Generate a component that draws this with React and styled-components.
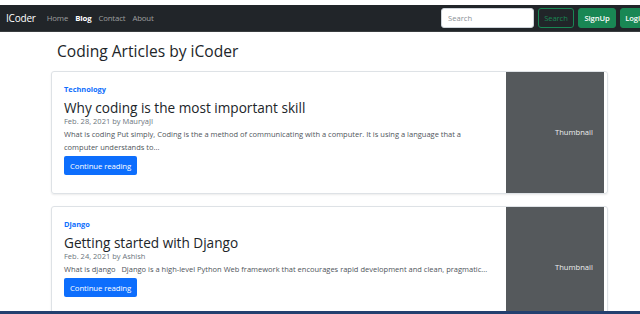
import React from 'react';
import styled, { createGlobalStyle } from 'styled-components';

const GlobalStyle = createGlobalStyle`
  html, body {
    margin: 0;
    padding: 0;
    background: #fff;
    font-family: 'Open Sans', 'Noto Sans', 'DejaVu Sans', sans-serif;
  }
`;

const Page = styled.div`
  padding-top: 5px;
  height: 309px;
  overflow: hidden;
`;

const Nav = styled.nav`
  height: 27px;
  background: #212529;
  border-bottom: 1px solid #3a3d40;
  display: flex;
  align-items: center;
  padding-left: 6px;
  box-sizing: border-box;
`;

const Brand = styled.a`
  color: #fff;
  font-size: 10px;
  margin-right: 11px;
  letter-spacing: -0.2px;
`;

const NavLink = styled.a`
  color: ${({ active }) => (active ? '#fff' : 'rgba(255,255,255,0.55)')};
  font-weight: ${({ active }) => (active ? 700 : 400)};
  font-size: 7.8px;
  margin-right: 7px;
  letter-spacing: -0.15px;
`;

const Right = styled.div`
  margin-left: auto;
  display: flex;
  align-items: center;
  gap: 4px;
  margin-right: -10px;
`;

const SearchInput = styled.input`
  width: 93px;
  height: 20px;
  box-sizing: border-box;
  border: 1px solid #ced4da;
  border-radius: 3px;
  padding: 0 6px;
  font: inherit;
  font-size: 7.6px;
  &::placeholder {
    color: #8a9096;
  }
`;

const Btn = styled.button`
  width: ${({ w }) => w}px;
  height: 20px;
  box-sizing: border-box;
  border-radius: 3px;
  font: inherit;
  font-size: 7.6px;
  padding: 0;
  text-align: center;
  border: 1px solid #198754;
  background: ${({ outline }) => (outline ? 'transparent' : '#198754')};
  color: ${({ outline }) => (outline ? '#198754' : '#fff')};
  font-weight: ${({ outline }) => (outline ? 400 : 600)};
  letter-spacing: -0.1px;
`;

const Container = styled.main`
  width: 557px;
  margin-left: 51px;
`;

const Heading = styled.h3`
  margin: 8px 0 9px 6px;
  font-size: 15.6px;
  font-weight: 500;
  line-height: 22px;
  color: #212529;
`;

const Card = styled.article`
  display: flex;
  height: 123px;
  box-sizing: border-box;
  border: 1px solid #dee2e6;
  border-radius: 3px;
  box-shadow: 0 1px 2px rgba(0, 0, 0, 0.08);
  margin-bottom: 12px;
  overflow: hidden;
`;

const Body = styled.div`
  flex: 1;
  padding: 11px 12px 0 12px;
`;

const Category = styled.strong`
  display: block;
  color: #0d6efd;
  font-size: 7.4px;
  font-weight: 700;
  line-height: 12px;
`;

const Title = styled.h3`
  margin: 4px 0 0;
  font-size: 13.6px;
  font-weight: 500;
  line-height: 18px;
  color: #212529;
`;

const Meta = styled.div`
  font-size: 7.5px;
  line-height: 9px;
  color: #6c757d;
  margin-bottom: 2px;
`;

const Text = styled.p`
  margin: 0 0 2px;
  font-size: 7.5px;
  line-height: 13px;
  color: #4f555b;
  max-width: 432px;
`;

const ReadBtn = styled.a`
  display: flex;
  width: max-content;
  align-items: center;
  height: 19px;
  padding: 0 6px;
  background: #0d6efd;
  color: #fff;
  font-size: 7.8px;
  border-radius: 2px;
  letter-spacing: -0.1px;
`;

const Thumb = styled.div`
  width: 98px;
  margin: 0 3px 0 0;
  background: #55595c;
  display: flex;
  align-items: center;
  padding-left: 49px;
  padding-bottom: 2px;
  box-sizing: border-box;
  color: #eceeef;
  font-size: 7.6px;
`;

const Taskbar = styled.div`
  position: fixed;
  left: 0;
  right: 0;
  bottom: 0;
  height: 3px;
  background: #23406f;
`;

const posts = [
  {
    cat: 'Technology',
    title: 'Why coding is the most important skill',
    meta: 'Feb. 28, 2021 by MauryaJI',
    text: 'What is coding Put simply, Coding is the a method of communicating with a computer. It is using a language that a computer understands to...',
  },
  {
    cat: 'Django',
    title: 'Getting started with Django',
    meta: 'Feb. 24, 2021 by Ashish',
    text: 'What is django \u00a0 Django is a high-level Python Web framework that encourages rapid development and clean, pragmatic...',
  },
];

export default function App() {
  return (
    <Page>
      <GlobalStyle />
      <Nav>
        <Brand>ICoder</Brand>
        <NavLink>Home</NavLink>
        <NavLink active>Blog</NavLink>
        <NavLink>Contact</NavLink>
        <NavLink>About</NavLink>
        <Right>
          <SearchInput placeholder="Search" />
          <Btn outline w={36}>Search</Btn>
          <Btn w={38}>SignUp</Btn>
          <Btn w={30}>Login</Btn>
        </Right>
      </Nav>
      <Container>
        <Heading>Coding Articles by iCoder</Heading>
        {posts.map((p) => (
          <Card key={p.title}>
            <Body>
              <Category>{p.cat}</Category>
              <Title>{p.title}</Title>
              <Meta>{p.meta}</Meta>
              <Text>{p.text}</Text>
              <ReadBtn>Continue reading</ReadBtn>
            </Body>
            <Thumb>Thumbnail</Thumb>
          </Card>
        ))}
      </Container>
      <Taskbar />
    </Page>
  );
}
